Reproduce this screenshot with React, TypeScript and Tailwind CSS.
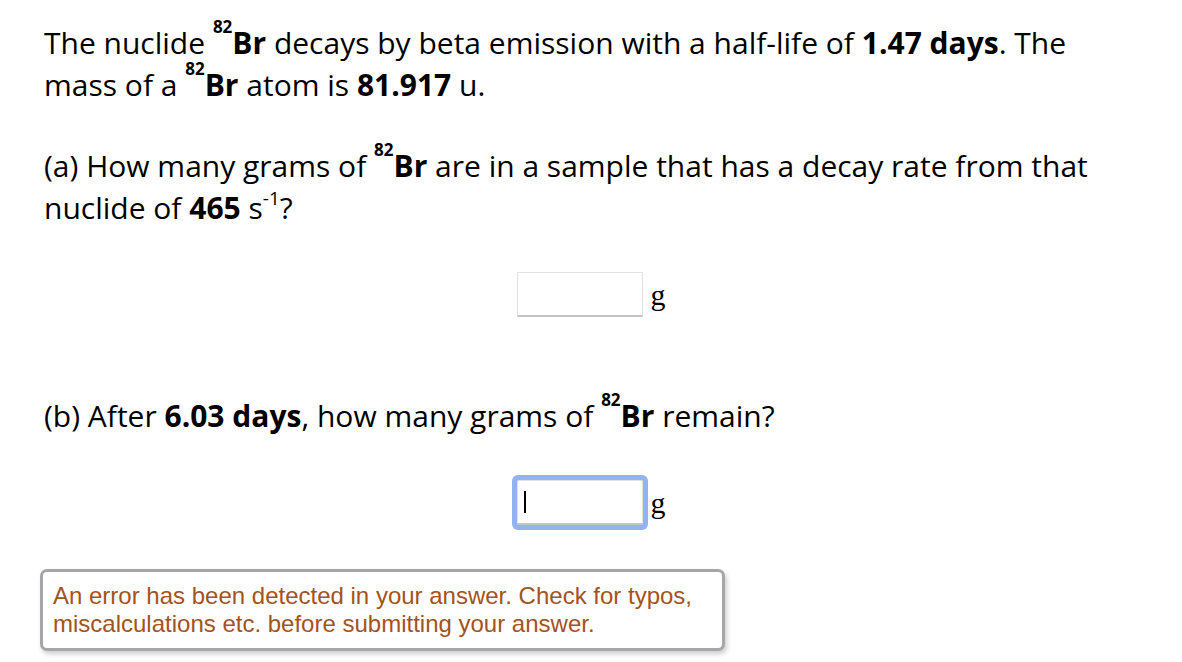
import React from 'react'

function Nuclide() {
    return (
        <span className="whitespace-nowrap">
            <span className="relative -top-[21px] text-[17px] font-bold leading-none">82</span>
            <b className="font-bold">Br</b>
        </span>
    )
}

function AnswerRow({ focused }: { focused?: boolean }) {
    return (
        <div className="flex items-center justify-center">
            <div
                className={`flex h-[45px] w-[126px] items-center border border-[#e2e2e2] border-b-2 border-b-[#c4c4c4] bg-white px-[6px] ${
                    focused ? 'rounded-[2px] shadow-[0_0_0_5px_#92b2f2]' : ''
                }`}
            >
                {focused && <span className="h-[22px] w-[2px] bg-black" />}
            </div>
            <span className="ml-[8px] text-[30px] leading-none" style={{ fontFamily: '"Liberation Serif", serif' }}>g</span>
        </div>
    )
}

export default function App() {
    return (
        <div className="min-h-[662px] w-[1182px] bg-white text-black" style={{ fontFamily: '"Open Sans", sans-serif' }}>
            <div className="pt-[22px] pl-[44px] pr-[40px]">
                <p className="text-[30px] leading-[42px]">
                    The nuclide <Nuclide /> decays by beta emission with a half-life of <b>1.47 days</b>. The
                    <br />
                    mass of a <Nuclide /> atom is <b>81.917</b> u.
                </p>

                <p className="mt-[39px] text-[30px] leading-[42px]">
                    (a) How many grams of <Nuclide /> are in a sample that has a decay rate from that
                    <br />
                    nuclide of <b>465</b> s<span className="relative -top-[14px] text-[19px] leading-none">-1</span>?
                </p>
            </div>

            <div className="mt-[43px]">
                <AnswerRow />
            </div>

            <div className="mt-[78px] pl-[44px]">
                <p className="text-[30px] leading-[42px]">
                    (b) After <b>6.03 days</b>, how many grams of <Nuclide /> remain?
                </p>
            </div>

            <div className="mt-[43px]">
                <AnswerRow focused />
            </div>

            <div className="mt-[44px] ml-[40px] w-[685px] rounded-[7px] border-[3px] border-[#a6a6a8] bg-white px-[10px] pt-[10px] pb-[10px] shadow-[2px_3px_5px_rgba(0,0,0,0.2)]">
                <p className="text-[24px] leading-[28px] text-[#a3531c]" style={{ fontFamily: '"Liberation Sans", Arial, sans-serif' }}>
                    An error has been detected in your answer. Check for typos,
                    <br />
                    miscalculations etc. before submitting your answer.
                </p>
            </div>
        </div>
    )
}
